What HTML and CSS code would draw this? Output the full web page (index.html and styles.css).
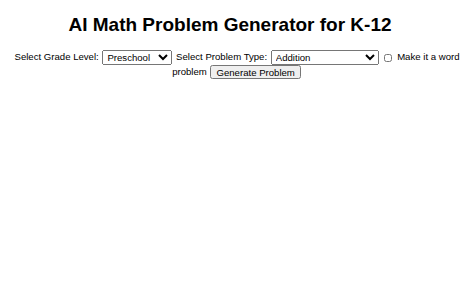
FILE: index.html
```html
<!DOCTYPE html>
<html lang="en">
<head>
    <meta charset="UTF-8">
    <meta name="viewport" content="width=device-width, initial-scale=1.0">
    <title>AI Math Problem Generator for K-12</title>
    <link rel="stylesheet" href="styles.css">
</head>
<body>
    <h1>AI Math Problem Generator for K-12</h1>
    <div class="controls">
        <label for="grade">Select Grade Level:</label>
        <select id="grade" class="grade-select">
            <option>Preschool</option>
            <option>Kindergarten</option>
            <option>Grade 1</option>
        </select>
        <label for="type">Select Problem Type:</label>
        <select id="type" class="type-select">
            <option>Addition</option>
            <option>Subtraction</option>
            <option>Multiplication</option>
            <option>Division</option>
        </select>
        <input type="checkbox" id="word" class="check">
        <label for="word">Make it a word problem</label>
        <button type="button" class="btn">Generate Problem</button>
    </div>
</body>
</html>
```

FILE: styles.css
```css
body {
    font-family: 'Liberation Sans', Arial, sans-serif;
    text-align: center;
    margin: 5px;
}

h1 {
    font-size: 19px;
    margin: 9px 0 14px;
    padding-right: 14px;
}

.controls {
    font-size: 9.6px;
    line-height: 12px;
}

select, button {
    font-family: 'Liberation Sans', Arial, sans-serif;
    font-size: 9.6px;
    line-height: normal;
    padding: 0;
    margin: 0 1px;
    vertical-align: middle;
}

button {
    height: 14px;
    padding: 0 4px;
}

.grade-select {
    width: 70px;
}

.type-select {
    width: 108px;
}

.check {
    width: 8px;
    height: 8px;
    margin: 0 2px;
    vertical-align: middle;
}
```
